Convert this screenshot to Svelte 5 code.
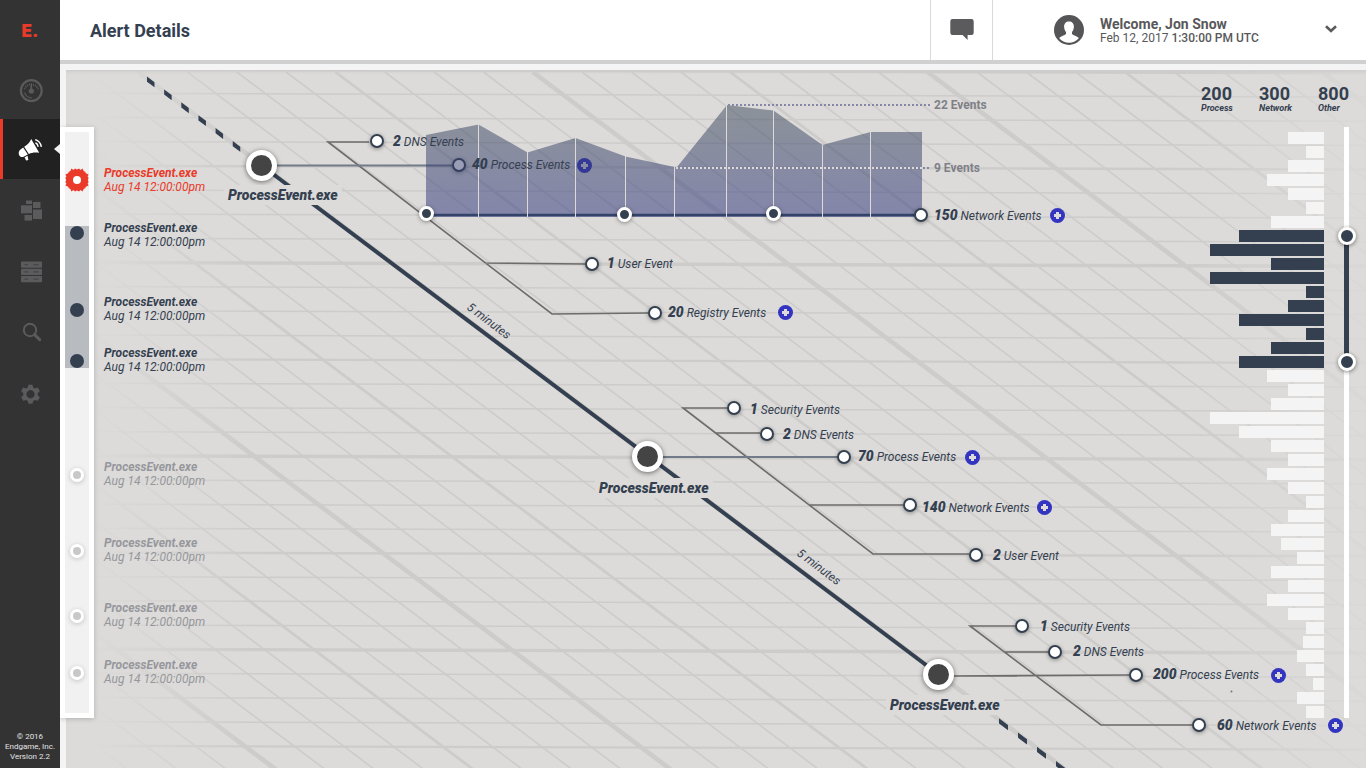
<script>
  // Canvas coordinates are page based; the canvas itself starts here.
  const ORIGIN = { x: 66, y: 70 };
  const place = (x, y) => `left:${x - ORIGIN.x}px;top:${y - ORIGIN.y}px`;

  const nav = ['Dashboard', 'Alerts', 'Inventory', 'Servers', 'Search', 'Settings'];

  const timeline = [
    { y: 180, label: 173, state: 'alert' },
    { y: 233, label: 228, state: 'active' },
    { y: 310, label: 302, state: 'active' },
    { y: 361, label: 353, state: 'active' },
    { y: 475, label: 467, state: 'idle' },
    { y: 551, label: 543, state: 'idle' },
    { y: 616, label: 608, state: 'idle' },
    { y: 673, label: 665, state: 'idle' }
  ];

  const hubs = [
    { x: 261, y: 165, lx: 228, ly: 195 },
    { x: 647, y: 456, lx: 599, ly: 488 },
    { x: 938, y: 674, lx: 890, ly: 705 }
  ];

  const events = [
    { n: 2, name: 'DNS Events', x: 377, y: 141, lx: 393, ly: 141 },
    { n: 40, name: 'Process Events', x: 459, y: 165, lx: 472, ly: 164, more: [584, 165] },
    { n: 1, name: 'User Event', x: 592, y: 264, lx: 607, ly: 263 },
    { n: 20, name: 'Registry Events', x: 655, y: 313, lx: 668, ly: 312, more: [785, 312] },
    { n: 1, name: 'Security Events', x: 734, y: 408, lx: 750, ly: 409 },
    { n: 2, name: 'DNS Events', x: 767, y: 434, lx: 783, ly: 434 },
    { n: 70, name: 'Process Events', x: 844, y: 457, lx: 858, ly: 456, more: [972, 457] },
    { n: 140, name: 'Network Events', x: 910, y: 505, lx: 922, ly: 507, more: [1044, 507] },
    { n: 2, name: 'User Event', x: 976, y: 555, lx: 993, ly: 555 },
    { n: 1, name: 'Security Events', x: 1022, y: 626, lx: 1040, ly: 626 },
    { n: 2, name: 'DNS Events', x: 1055, y: 652, lx: 1073, ly: 651 },
    { n: 200, name: 'Process Events', x: 1136, y: 675, lx: 1153, ly: 674, more: [1278, 675] },
    { n: 60, name: 'Network Events', x: 1199, y: 725, lx: 1217, ly: 725, more: [1335, 725] }
  ];
  const charted = { n: 150, name: 'Network Events', x: 921, y: 215, lx: 934, ly: 215, more: [1057, 215] };

  const branches = [
    'M369 142H328L552 314L648 313M485 263L585 264',
    'M727 408H683L873 554H969M716 433H760M809 505H903',
    'M1015 626H970L1101 725H1192M1005 652H1048M954 676L1129 675'
  ];

  const gridRows = Array.from({ length: 30 }, (_, i) => 69 + i * 24.17);
  const gridDiagonals = Array.from({ length: 46 }, (_, i) => {
    const k = i - 20;
    return { x: 138 + k * 49.35, w: k % 8 === 0 ? 4.6 : k % 4 === 0 ? 2.8 : 1.6 };
  });
  const rowWidth = (k) => (k % 8 === 0 ? 3.4 : k % 4 === 0 ? 2.4 : 1.5);

  const dash = (x, y, w) => `M${x} ${y - 2.8}l${w} ${w * 0.752}v5.2l${-w} ${-w * 0.752}z`;
  const dashes = [
    ...[0, 1, 2, 3, 4, 5].map((i) => dash(147 + i * 17.15, 79.3 + i * 12.9, 7.5)),
    ...[0, 1, 2, 3].map((i) => dash(999 + i * 19, 721 + i * 14.3, 9))
  ].join('');

  const chartLines = [
    [478.5, 124], [527.5, 152], [575.5, 138], [625.5, 156], [674.5, 167],
    [726.5, 105], [773.5, 110], [822.5, 145], [870.5, 132]
  ];
  const chartDots = [[426, 213], [624, 214], [773, 213]];

  const totals = [
    { value: 200, name: 'Process' },
    { value: 300, name: 'Network' },
    { value: 800, name: 'Other' }
  ];
  const bars = [
    36, 18, 36, 57, 36, 18, 53, 85, 114, 53, 114, 18, 36, 85, 18, 53, 85, 57, 36, 53, 114,
    85, 53, 36, 57, 36, 18, 36, 53, 43, 27, 53, 36, 57, 36, 18, 21, 27, 18, 11, 27, 18
  ];

  const SPAN = 573;
  let from = $state(100);
  let to = $state(226);
</script>

{#snippet eventNode(e)}
  <span class="dot" style={place(e.x, e.y)}></span>
  <span class="event" style={place(e.lx, e.ly)}><b>{e.n}</b> {e.name}</span>
  {#if e.more}
    <button class="more" aria-label="Expand {e.n} {e.name}" style={place(...e.more)}>
      <svg viewBox="0 0 15 15"><path d="M7.5 4v7M4 7.5h7" /></svg>
    </button>
  {/if}
{/snippet}

<div class="app">
  <aside>
    <a class="logo" href="#home">E.</a>
    <nav>
      {#each nav as item, i}
        <button class:active={i === 1} aria-label={item}>
          <svg viewBox="0 0 60 60">
            {#if i === 0}
              <g fill="none" stroke="#5b5b5d">
                <circle cx="31.3" cy="32.6" r="10.4" stroke-width="2.2" />
                <path d="M24.6 31.2a7 7 0 0 1 13.4 0" stroke-width="2" stroke-dasharray="1 1.1" />
                <path d="M24.6 34.5a7.2 7.2 0 0 0 7.5 5.4" stroke-width="1.1" />
                <path d="M31.3 33v-7" stroke-width="1.6" />
              </g>
              <circle cx="31.3" cy="33" r="2.6" fill="#5b5b5d" />
            {:else if i === 1}
              <g fill="#fff">
                <path d="M31.2 20l8 13.800c-3.800-.8-7.300-.4-10.400 1.100l-4.600-7.100c3.100-1.700 5.700-4.300 7-7.800z" />
                <path d="M23.200 28.400l4.600 7.200-4.700 2.300c-3.900 1.200-6-4.600-2.900-7.200z" />
                <path d="M24.600 38.200l3-1.500.8 4.200-2.300.5z" />
              </g>
              <path d="M35.500 23.800q2.300 1 2.600 4M35.200 20.600q5 1.400 6.200 7.200" fill="none" stroke="#fff" stroke-width="1.500" />
            {:else if i === 2}
              <g fill="#5b5b5d">
                <rect x="26" y="20.5" width="6" height="3.5" /><rect x="33" y="22" width="7.5" height="6" />
                <rect x="21" y="25.3" width="11" height="8" /><rect x="33" y="29.500" width="9" height="9.500" />
                <rect x="24.500" y="35" width="7.500" height="5.600" />
              </g>
            {:else if i === 3}
              <g fill="#5b5b5d">
                <rect x="21" y="20.500" width="21" height="6.200" rx=".8" /><rect x="21" y="27.800" width="21" height="6.200" rx=".8" />
                <rect x="21" y="35" width="21" height="6.200" rx=".8" />
              </g>
              <path d="M24.500 23.600h3.500M33.500 23.600h5M24.500 30.900h3.500M33.500 30.900h5M24.500 38.100h3.500M33.500 38.100h5" stroke="#454546" stroke-width="1.300" />
            {:else if i === 4}
              <circle cx="30" cy="28" r="6.200" fill="none" stroke="#5b5b5d" stroke-width="2" />
              <path d="M34.500 32.700l5.200 5" stroke="#5b5b5d" stroke-width="3" stroke-linecap="round" />
            {:else}
              <path
                transform="translate(0 .7)"
                fill="#5b5b5d" fill-rule="evenodd"
                d="M28.500 21h4l.7 2.800 1.700 1 2.900-.9 2 3.500-2.100 2.100v2l2.100 2.100-2 3.500-2.900-.9-1.700 1-.7 2.800h-4l-.7-2.800-1.700-1-2.900.9-2-3.500 2.100-2.100v-2l-2.100-2.100 2-3.500 2.900.9 1.700-1zM30.500 26.400a4.100 4.100 0 1 0 .01 0z"
              />
            {/if}
          </svg>
        </button>
      {/each}
    </nav>
    <small>© 2016<br />Endgame, Inc.<br />Version 2.2</small>
  </aside>

  <div class="main">
    <header>
      <h1>Alert Details</h1>
      <button class="chat" aria-label="Messages">
        <svg width="24" height="22" viewBox="0 0 24 22">
          <path fill="#5b5b5d" d="M2.5 0h19A2.200 2.200 0 0 1 23.700 2.200v11.600a2.200 2.200 0 0 1-2.200 2.200H17.600v5L12.600 16H2.500A2.200 2.200 0 0 1 .3 13.800V2.200A2.200 2.200 0 0 1 2.500 0z" />
        </svg>
      </button>
      <button class="user">
        <svg width="30" height="30" viewBox="0 0 30 30">
          <circle cx="15" cy="15" r="15" fill="#555557" />
          <path fill="#fff" d="M15 6.600c3.200 0 5 2.200 4.900 5.200-.1 2.300-.8 3.900-1.900 5.200v1.900c1.300 1.500 4.800 1.800 6.900 4A12.500 12.500 0 0 1 5.100 22.900c2.100-2.200 5.600-2.500 6.900-4V17c-1.100-1.300-1.800-2.900-1.900-5.200-.1-3 1.700-5.200 4.900-5.200z" />
        </svg>
        <span class="who"><b>Welcome, Jon Snow</b><span>Feb 12, 2017 <em>1:30:00 PM UTC</em></span></span>
        <svg class="chevron" width="12" height="8" viewBox="0 0 12 8"><path d="M1 1.200l5 4.800 5-4.800" fill="none" stroke="#5b5b5d" stroke-width="2.600" /></svg>
      </button>
    </header>

    <div class="stage">
      <div class="canvas">
        <svg class="layer" aria-hidden="true">
          <defs>
            <linearGradient id="edge">
              <stop offset="0.02" stop-color="#000" /><stop offset="0.14" stop-color="#fff" />
              <stop offset="0.86" stop-color="#fff" /><stop offset="1" stop-color="#222" />
            </linearGradient>
            <mask id="fade" maskUnits="userSpaceOnUse" x="0" y="0" width="100%" height="100%">
              <rect width="100%" height="100%" fill="url(#edge)" />
            </mask>
          </defs>
          <g mask="url(#fade)">
            <g transform="translate({-ORIGIN.x} {-ORIGIN.y})" stroke="#cdcccb">
              {#each gridRows as y, k}
                <path d="M60 {y}l4000 12" stroke-width={rowWidth(k)} />
              {/each}
              {#each gridDiagonals as d}
                <path d="M{d.x} 72l2000 1504" stroke-width={d.w} />
              {/each}
            </g>
          </g>
          <g transform="translate({-ORIGIN.x} {-ORIGIN.y})" fill="none">
            <path d={dashes} fill="#344050" />
            <path d="M261 165L938 674" stroke="#344050" stroke-width="4" />
            {#each branches as b}
              <path d={b} stroke="#6d6b6b" stroke-width="1.6" />
            {/each}
            <path d="M276 165.500H452M663 457H838" stroke="#727b89" stroke-width="2.200" />
            <circle cx="1231.500" cy="691.500" r="1" fill="#777" />
          </g>
        </svg>

        {#each hubs as h}
          <span class="hub" style={place(h.x, h.y)}></span>
          <strong class="hub-name" style={place(h.lx, h.ly)}>ProcessEvent.exe</strong>
        {/each}
        <span class="span-note" style={place(489, 321)}>5 minutes</span>
        <span class="span-note" style={place(819, 567)}>5 minutes</span>

        {#each events as e}
          {@render eventNode(e)}
        {/each}

        <svg class="layer over" aria-hidden="true">
          <defs>
            <linearGradient id="area" x1="0" y1="0" x2="0" y2="1">
              <stop offset="0" stop-color="#3c4959" /><stop offset="1" stop-color="#2c317c" />
            </linearGradient>
          </defs>
          <g transform="translate({-ORIGIN.x} {-ORIGIN.y})">
            <path
              fill="url(#area)" fill-opacity=".5"
              d="M426 217V135L478.500 124.500L527.500 152.500L575.500 138L625.500 156.500L674.500 167H677L727 105L773.500 110.500L822.500 145L870.500 132H922V217z"
            />
            <path d="M426 215H921" stroke="#344468" stroke-width="2.400" />
            {#each chartLines as [x, y]}
              <path d="M{x} {y}V217" stroke="#dcdbd9" />
            {/each}
            <g fill="none" stroke-width="2" stroke-dasharray="2 2">
              <path d="M728 105H931M923 168H931" stroke="#8487a6" />
              <path d="M676 168H922" stroke="#dcdbd9" />
            </g>
          </g>
        </svg>
        {#each chartDots as [x, y]}
          <span class="dot solid" style={place(x, y)}></span>
        {/each}
        <span class="scale" style={place(934, 105)}>22 Events</span>
        <span class="scale" style={place(934, 168)}>9 Events</span>
        {@render eventNode(charted)}
      </div>

      <div class="rail">
        <div class="range" style="top:94px;height:142px"></div>
        {#each timeline as t}
          {#if t.state === 'alert'}
            <svg class="burst" style="top:{t.y - 132}px" width="24" height="24" viewBox="0 0 24 24">
              <path
                fill="#e93a2a"
                d="M6.500.5l2 1.400L10 .4l2 1.200L14 .4l1.500 1.500 2-1.400 1.300 2.700 1.400.6.600 1.400 2.800 1.300-1 2 1 1.500-.8 2 .8 2-1 1.500 1 2-2.800 1.300-.6 1.400-1.400.6-1.300 2.700-2-1.400-1.500 1.500-2-1.200-2 1.200-1.500-1.500-2 1.400-1.300-2.700-1.400-.6-.6-1.400L.4 17.500l1-2-1-1.500.8-2-.8-2 1-1.500-1-2L3.200 5.200l.6-1.400 1.400-.6z"
              />
              <circle cx="12" cy="12" r="4" fill="#fff" />
            </svg>
          {:else}
            <span class="mark {t.state}" style="top:{t.y - 132}px"></span>
          {/if}
          <a class="entry {t.state}" href="#event" style="top:{t.label - 139}px"><b>ProcessEvent.exe</b><br />Aug 14 12:00:00pm</a>
        {/each}
      </div>

      <section class="summary">
        <dl>
          {#each totals as t}
            <div><dd>{t.value}</dd><dt>{t.name}</dt></div>
          {/each}
        </dl>
        <div class="histogram">
          <div class="bars">
            {#each bars as w, i}
              <i class:selected={i > 6 && i < 17} style="width:{w}px"></i>
            {/each}
          </div>
          <div class="slider">
            <div class="selection" style="top:{from + 9}px;height:{to - from}px"></div>
            <input type="range" aria-label="Range start" min="0" max={SPAN} bind:value={from} />
            <input type="range" aria-label="Range end" min="0" max={SPAN} bind:value={to} />
          </div>
        </div>
      </section>
    </div>
  </div>
</div>

<style>
  :global(body) { margin: 0; }
  .app {
    display: grid;
    grid-template-columns: 60px 1fr;
    min-height: 100vh;
    background: #f4f4f4;
    color: #344050;
    font-family: Roboto, "Liberation Sans", sans-serif;
    font-size: 12px;
  }
  button { border: 0; padding: 0; background: none; font: inherit; color: inherit; cursor: pointer; }
  a { color: inherit; text-decoration: none; }
  svg { display: block; }

  aside { display: flex; flex-direction: column; background: #333; position: relative; z-index: 2; }
  .logo {
    height: 58px;
    line-height: 62px;
    text-align: center;
    color: #e93a2a;
    font-family: Inter, Roboto, sans-serif;
    font-weight: 900;
    font-size: 17px;
  }
  nav { display: flex; flex-direction: column; gap: 1px; }
  nav button { height: 60px; position: relative; }
  nav svg { width: 60px; height: 60px; }
  nav .active { background: #212121; box-shadow: inset 3px 0 #e93a2a; }
  nav .active::after {
    content: "";
    position: absolute;
    right: 0;
    top: 25px;
    border: solid transparent;
    border-width: 5px 6px 5px 0;
    border-right-color: #f1f1f1;
  }
  small { margin-top: auto; padding-bottom: 6px; text-align: center; font-size: 8px; line-height: 10px; color: #e4e4e4; }

  .main { display: flex; flex-direction: column; min-width: 0; }
  header {
    display: flex;
    height: 60px;
    background: #fff;
    border-bottom: 4px solid #d0d0d0;
  }
  h1 { margin: 0; padding-left: 30px; flex: 1; font-size: 18px; line-height: 61px; font-weight: 700; }
  .chat { width: 63px; box-sizing: border-box; display: grid; place-items: center; border: solid #d9d9d9; border-width: 0 1px; }
  .user { display: flex; align-items: center; width: 373px; box-sizing: border-box; padding: 0 29px 0 61px; color: #58585a; text-align: left; }
  .who { flex: 1; margin-left: 16px; padding-top: 2px; line-height: 14px; font-size: 12px; }
  .who b { display: block; font-size: 14px; }
  .who em { font-style: normal; font-weight: 500; }
  .chevron { margin-bottom: 3px; }

  .stage {
    position: relative;
    flex: 1;
    display: flex;
    justify-content: space-between;
    margin: 6px 0 0 6px;
    background: #dcdbd9;
  }
  .canvas { position: absolute; inset: 0; overflow: hidden; box-shadow: inset 0 3px 3px -1px #cfcecd; }
  .layer { position: absolute; inset: 0; width: 100%; height: 100%; }
  .over { pointer-events: none; }
  .dot, .hub, .more, .event, .scale, .hub-name, .span-note { position: absolute; white-space: nowrap; }
  .dot {
    width: 10px;
    height: 10px;
    margin: -7px;
    border: 2px solid #344050;
    border-radius: 50%;
    background: #fff;
    box-shadow: 0 1px 4px #0006;
  }
  .dot.solid { width: 9px; height: 9px; margin: -7px; border: 3px solid #fff; background: #344050; }
  .hub {
    width: 21px;
    height: 21px;
    margin: -15px;
    border: 5px solid #fff;
    border-radius: 50%;
    background: #444;
    box-shadow: 0 1px 5px #0008;
  }
  .event, .scale { margin-top: -8px; line-height: 16px; font-style: italic; }
  .event { z-index: 1; }
  .event b { font-size: 14px; font-weight: 900; }
  .scale { font-style: normal; font-weight: 700; color: #7f8087; }
  .hub-name { margin: -10px 0 0 -4px; padding: 0 4px; line-height: 20px; font-size: 14px; font-weight: 900; font-style: italic; background: #dcdbd9; }
  .span-note { transform: translate(-50%, -50%) rotate(37deg); font-style: italic; }
  .more { width: 15px; height: 15px; margin: -7px; border-radius: 50%; background: #3335c0; }
  .more path { stroke: #dcdbd9; stroke-width: 3; }

  .rail {
    position: relative;
    width: 24px;
    margin: 57px 0 50px -6px;
    border: 5px solid #fff;
    background: #f1f1f1;
    box-shadow: 0 1px 5px #0003;
  }
  .range, .mark, .burst, .entry { position: absolute; }
  .range { left: 0; right: 0; background: #b8bbc0; }
  .burst { left: 0; margin-top: -12px; }
  .mark { left: 5px; width: 14px; height: 14px; margin-top: -7px; border-radius: 50%; background: #344050; }
  .mark.idle { box-sizing: border-box; border: 3px solid #fff; background: #c8c8c8; box-shadow: 0 1px 5px #0003; }
  .entry { left: 39px; line-height: 14px; font-style: italic; white-space: nowrap; }
  .entry.alert { color: #e93a2a; }
  .entry.idle { color: #96979c; }

  .summary { position: relative; display: flex; flex-direction: column; width: 148px; margin-right: 17px; pointer-events: none; }
  dl { display: grid; grid-template-columns: 58px 59px auto; margin: 14px 0 0; height: 43px; }
  dl div { display: flex; flex-direction: column; }
  dd { margin: 0; font-size: 18px; line-height: 20px; font-weight: 700; }
  dt { font-size: 9px; line-height: 9px; font-weight: 700; font-style: italic; }
  .histogram { display: flex; justify-content: flex-end; gap: 20px; }
  .bars { display: flex; flex-direction: column; align-items: flex-end; gap: 2px; padding-top: 5px; }
  .bars i { height: 12px; background: #f4f4f4; }
  .bars i.selected { background: #344050; }
  .slider { position: relative; width: 5px; background: #fff; pointer-events: auto; }
  .selection { position: absolute; left: 0; right: 0; background: #344050; }
  input {
    position: absolute;
    top: 0;
    left: -6px;
    width: 18px;
    height: 100%;
    margin: 0;
    appearance: none;
    background: none;
    writing-mode: vertical-lr;
    pointer-events: none;
  }
  input::-webkit-slider-thumb {
    appearance: none;
    box-sizing: border-box;
    width: 18px;
    height: 18px;
    border: 3px solid #fff;
    border-radius: 50%;
    background: #344050;
    box-shadow: 0 1px 4px #0007;
    pointer-events: auto;
  }
</style>
